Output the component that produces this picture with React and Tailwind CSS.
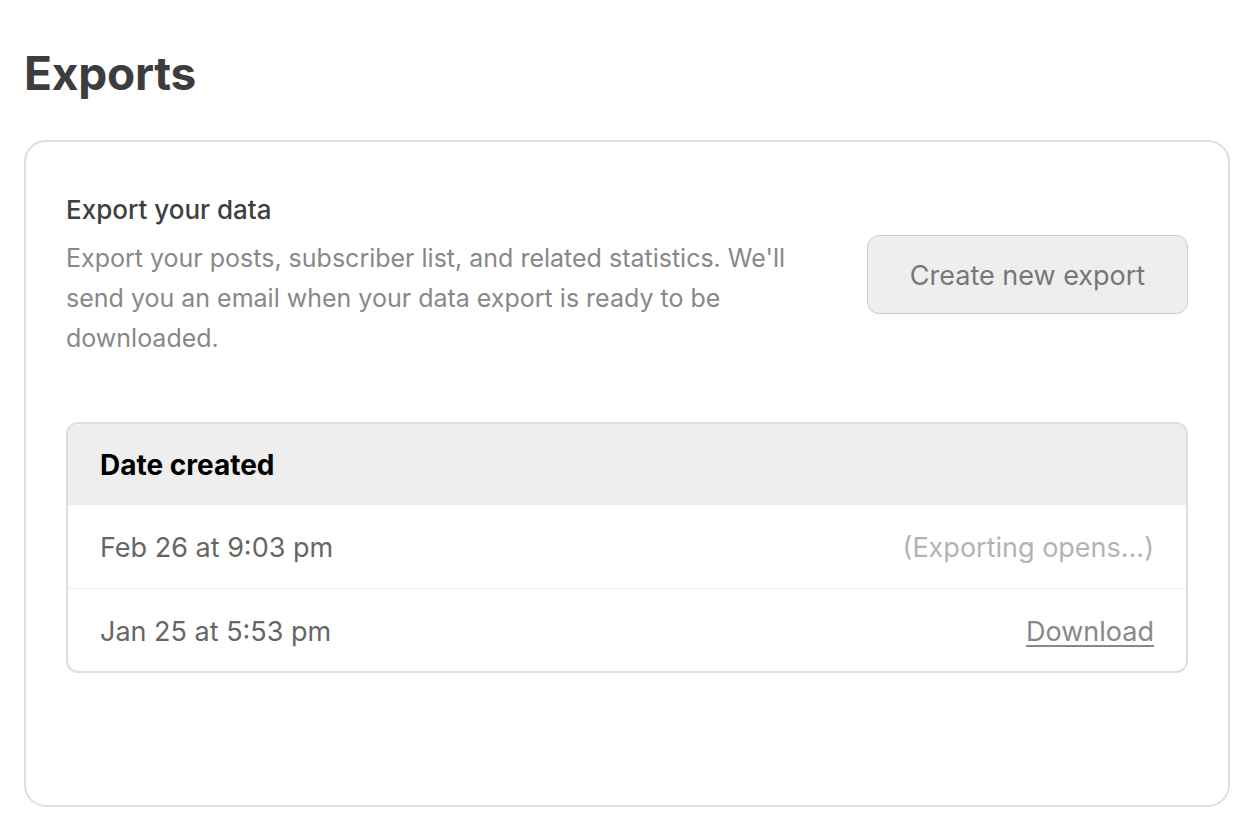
const rows = [
  { date: "Feb 26 at 9:03 pm", status: "pending" },
  { date: "Jan 25 at 5:53 pm", status: "ready" },
];

export default function App() {
  return (
    <div
      className="min-h-screen bg-white px-6 pt-[42px] text-[#3f3f3f]"
      style={{ fontFamily: "Inter, 'Noto Sans', sans-serif" }}
    >
      <h1 className="text-[46px] font-bold leading-[62px] tracking-[-0.005em] text-[#3d3d3d]">
        Exports
      </h1>

      <div className="mt-[36px] w-[1206px] rounded-[22px] border-2 border-[#dedede] px-[40px] pb-[132px] pt-[52px]">
        {/* Header */}
        <div className="flex items-start justify-between">
          <div className="w-[760px]">
            <h2 className="text-[26px] font-medium leading-[32px] text-[#3f3f3f]">
              Export your data
            </h2>
            <p className="mt-[12px] text-[25px] leading-[40px] text-[#888888]">
              Export your posts, subscriber list, and related statistics. We'll
              send you an email when your data export is ready to be
              downloaded.
            </p>
          </div>
          <button className="mt-[41px] h-[79px] w-[321px] rounded-[12px] border-[1.5px] border-[#cccccc] bg-[#eeeeee] pt-[4px] text-[27px] text-[#777777]">
            Create new export
          </button>
        </div>

        {/* Table */}
        <div className="mt-[64px] overflow-hidden rounded-[12px] border-2 border-[#dedede]">
          <div className="flex h-[81px] items-center bg-[#eeeeee] px-[32px] text-[28px] font-bold text-black">
            Date created
          </div>
          {rows.map((row, index) => (
            <div
              key={index}
              className={`flex h-[83px] items-center justify-between px-[32px] pt-[4px] text-[27px] text-[#666666] ${
                index > 0 ? "border-t-[1.5px] border-[#f0f0f0]" : ""
              }`}
            >
              <span>{row.date}</span>
              {row.status === "pending" ? (
                <span className="text-[#b3b3b3]">(Exporting opens...)</span>
              ) : (
                <a href="#" className="text-[#888888] underline underline-offset-4">
                  Download
                </a>
              )}
            </div>
          ))}
        </div>
      </div>
    </div>
  );
}
